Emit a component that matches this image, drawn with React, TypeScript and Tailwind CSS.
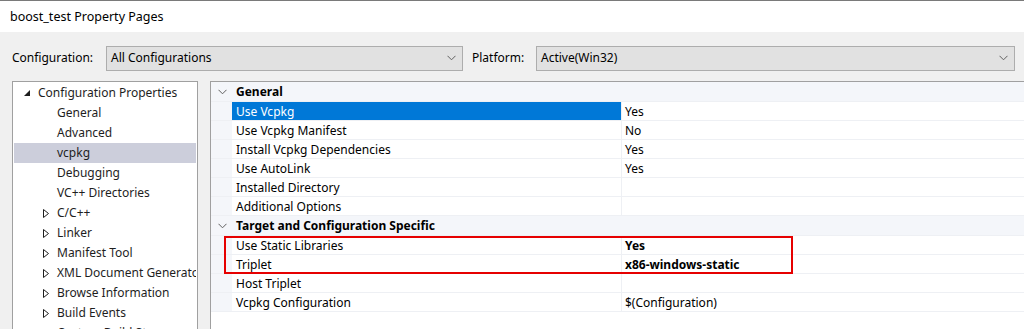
import React from "react";

const Chevron = ({ className = "" }: { className?: string }) => (
  <svg width="9" height="6" viewBox="0 0 9 6" className={className}>
    <path d="M0.5 0.8 L4.5 4.8 L8.5 0.8" fill="none" stroke="#606060" strokeWidth="1" />
  </svg>
);

const Expanded = () => (
  <svg width="6" height="6" viewBox="0 0 6 6" className="shrink-0">
    <path d="M6 0 L6 6 L0 6 Z" fill="#1e1e1e" />
  </svg>
);

const Collapsed = () => (
  <svg width="6" height="9" viewBox="0 0 6 9" className="shrink-0">
    <path d="M0.5 0.5 L5.5 4.5 L0.5 8.5 Z" fill="none" stroke="#1e1e1e" strokeWidth="1" />
  </svg>
);

const treeChildren: { label: string; expandable?: boolean; selected?: boolean }[] = [
  { label: "General" },
  { label: "Advanced" },
  { label: "vcpkg", selected: true },
  { label: "Debugging" },
  { label: "VC++ Directories" },
  { label: "C/C++", expandable: true },
  { label: "Linker", expandable: true },
  { label: "Manifest Tool", expandable: true },
  { label: "XML Document Generator", expandable: true },
  { label: "Browse Information", expandable: true },
  { label: "Build Events", expandable: true },
  { label: "Custom Build Step", expandable: true },
];

type Prop = { name: string; value?: string; bold?: boolean; selected?: boolean };

const Header = ({ title }: { title: string }) => (
  <div className="flex h-[20px] items-center bg-[#f4f6fa] border-b border-[#eef0f4]">
    <div className="w-[21px] shrink-0 flex justify-center pl-[2px]">
      <Chevron />
    </div>
    <div className="font-bold text-black pl-[4px] pt-[1px]">{title}</div>
  </div>
);

const Row = ({ p }: { p: Prop }) => (
  <div className="flex h-[19px] border-b border-[#eef0f4]">
    <div className="w-[21px] shrink-0 bg-[#f4f6fa]" />
    <div
      className={`w-[389px] shrink-0 flex items-center pl-[4px] pt-[1px] ${p.selected ? "bg-[#0078d7] text-white" : "text-black"}`}
    >
      {p.name}
    </div>
    <div className="w-[1px] shrink-0 bg-[#eef0f4]" />
    <div className={`flex-1 flex items-center pl-[3px] pt-[1px] text-black ${p.bold ? "font-bold" : ""}`}>
      {p.value ?? ""}
    </div>
  </div>
);

export default function App() {
  const general: Prop[] = [
    { name: "Use Vcpkg", value: "Yes", selected: true },
    { name: "Use Vcpkg Manifest", value: "No" },
    { name: "Install Vcpkg Dependencies", value: "Yes" },
    { name: "Use AutoLink", value: "Yes" },
    { name: "Installed Directory" },
    { name: "Additional Options" },
  ];
  const target: Prop[] = [
    { name: "Use Static Libraries", value: "Yes", bold: true },
    { name: "Triplet", value: "x86-windows-static", bold: true },
    { name: "Host Triplet" },
    { name: "Vcpkg Configuration", value: "$(Configuration)" },
  ];

  return (
    <div className="w-[1024px] h-[329px] overflow-hidden bg-[#f0f0f0] flex flex-col font-['Noto_Sans',sans-serif] text-[12px] leading-none text-[#1e1e1e]">
      <div className="h-[1px] bg-[#7a7a7a] shrink-0" />
      <div className="h-[31px] bg-white shrink-0 flex items-center pl-[10px] pt-[1px] text-[12.5px] text-black">
        boost_test Property Pages
      </div>
      <div className="flex items-center h-[49px] shrink-0 pt-[3px]">
        <div className="pl-[12px] w-[106px] shrink-0 text-black">Configuration:</div>
        <div className="w-[357px] shrink-0 h-[25px] border border-[#adadad] bg-[#e1e1e1] flex items-center justify-between pl-[4px] pr-[6px] text-black">
          <span>All Configurations</span>
          <Chevron />
        </div>
        <div className="pl-[9px] w-[73px] shrink-0 text-black">Platform:</div>
        <div className="w-[479px] shrink-0 h-[25px] border border-[#adadad] bg-[#e1e1e1] flex items-center justify-between pl-[4px] pr-[6px] text-black">
          <span>Active(Win32)</span>
          <Chevron />
        </div>
      </div>
      <div className="flex flex-1 min-h-0 pl-[12px]">
        <div className="w-[186px] shrink-0 border-t border-l border-r border-[#a0a0a0] bg-white pt-[1px] pl-[1px] pr-[1px] overflow-hidden">
          <div className="h-[20px] flex items-center pl-[10px] gap-[8px] whitespace-nowrap">
            <Expanded />
            <span>Configuration Properties</span>
          </div>
          {treeChildren.map((c) => (
            <div
              key={c.label}
              className={`h-[20px] flex items-center whitespace-nowrap overflow-hidden ${c.selected ? "bg-[#cccedb]" : ""}`}
            >
              <div className="w-[43px] shrink-0 pl-[29px] flex items-center">
                {c.expandable ? <Collapsed /> : null}
              </div>
              <span>{c.label}</span>
            </div>
          ))}
        </div>
        <div className="ml-[12px] flex-1 border-t border-l border-[#a0a0a0] bg-white">
          <Header title="General" />
          {general.map((p) => (
            <Row key={p.name} p={p} />
          ))}
          <Header title="Target and Configuration Specific" />
          <div className="relative">
            {target.map((p) => (
              <Row key={p.name} p={p} />
            ))}
            <div className="absolute left-[13px] top-[0px] w-[569px] h-[38px] border-2 border-[#e60000]" />
          </div>
        </div>
      </div>
    </div>
  );
}
